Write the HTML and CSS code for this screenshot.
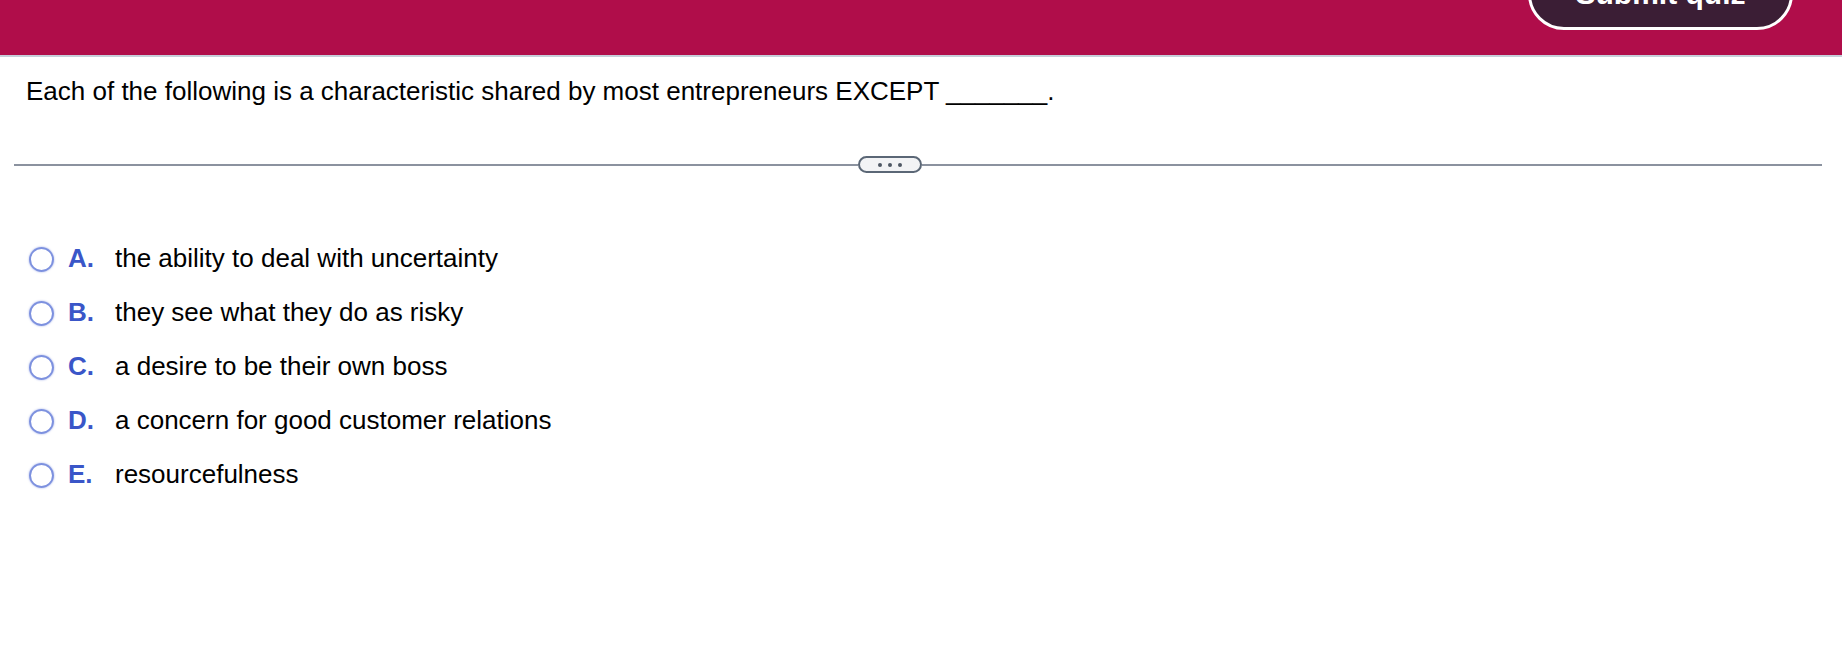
FILE: index.html
```html
<!DOCTYPE html>
<html lang="en">
<head>
    <meta charset="UTF-8">
    <meta name="viewport" content="width=device-width, initial-scale=1.0">
    <title>Quiz</title>
    <link rel="stylesheet" href="styles.css">
</head>
<body>
    <header class="topbar">
        <button class="submit-btn">Submit quiz</button>
    </header>

    <main class="quiz">
        <p class="question">Each of the following is a characteristic shared by most entrepreneurs EXCEPT _______.</p>

        <div class="divider">
            <span class="divider-line left"></span>
            <span class="more-pill"><i></i><i></i><i></i></span>
            <span class="divider-line"></span>
        </div>

        <ul class="choices">
            <li class="choice"><span class="radio"></span><span class="letter">A.</span><span class="text">the ability to deal with uncertainty</span></li>
            <li class="choice"><span class="radio"></span><span class="letter">B.</span><span class="text">they see what they do as risky</span></li>
            <li class="choice"><span class="radio"></span><span class="letter">C.</span><span class="text">a desire to be their own boss</span></li>
            <li class="choice"><span class="radio"></span><span class="letter">D.</span><span class="text">a concern for good customer relations</span></li>
            <li class="choice"><span class="radio"></span><span class="letter">E.</span><span class="text">resourcefulness</span></li>
        </ul>
    </main>
</body>
</html>
```

FILE: styles.css
```css
body {
    margin: 0;
    font-family: "Liberation Sans", Arial, sans-serif;
    color: #000;
    background: #fff;
}
.topbar {
    height: 55px;
    background-color: #b00d4a;
    border-bottom: 2px solid #c6ced9;
    display: flex;
    justify-content: flex-end;
    align-items: flex-start;
    padding-right: 49px;
    overflow: hidden;
}
.submit-btn {
    margin-top: -42px;
    height: 72px;
    width: 265px;
    box-sizing: border-box;
    background-color: #3b1e35;
    color: #fff;
    border: 3px solid #fff;
    border-radius: 36px;
    font-family: inherit;
    font-size: 30px;
    font-weight: bold;
    padding: 0;
}
.quiz {
    padding: 0 20px 0 14px;
}
.question {
    margin: 19px 0 0 12px;
    font-size: 26px;
    line-height: 30px;
}
.divider {
    display: flex;
    align-items: center;
    margin-top: 50px;
}
.divider-line {
    flex: 1;
    height: 2px;
    background: #8b929f;
}
.divider-line.left {
    flex: none;
    width: 844px;
}
.more-pill {
    width: 64px;
    height: 17px;
    box-sizing: border-box;
    border: 2px solid #5b6776;
    border-radius: 9px;
    background: #f2f3f5;
    display: flex;
    justify-content: center;
    align-items: center;
    gap: 6px;
}
.more-pill i {
    width: 4px;
    height: 4px;
    border-radius: 50%;
    background: #4f5864;
}
.choices {
    list-style: none;
    margin: 58px 0 0;
    padding: 0;
}
.choice {
    display: flex;
    align-items: center;
    height: 54px;
    padding-left: 15px;
    font-size: 26px;
    line-height: 30px;
}
.radio {
    width: 25px;
    height: 25px;
    box-sizing: border-box;
    border: 2.5px solid #7d91df;
    border-radius: 50%;
    box-shadow: 0 0 2px rgba(110, 130, 220, 0.7);
    margin-top: 2px;
    margin-right: 14px;
}
.letter {
    width: 47px;
    color: #3a56c8;
    font-weight: bold;
}
```
